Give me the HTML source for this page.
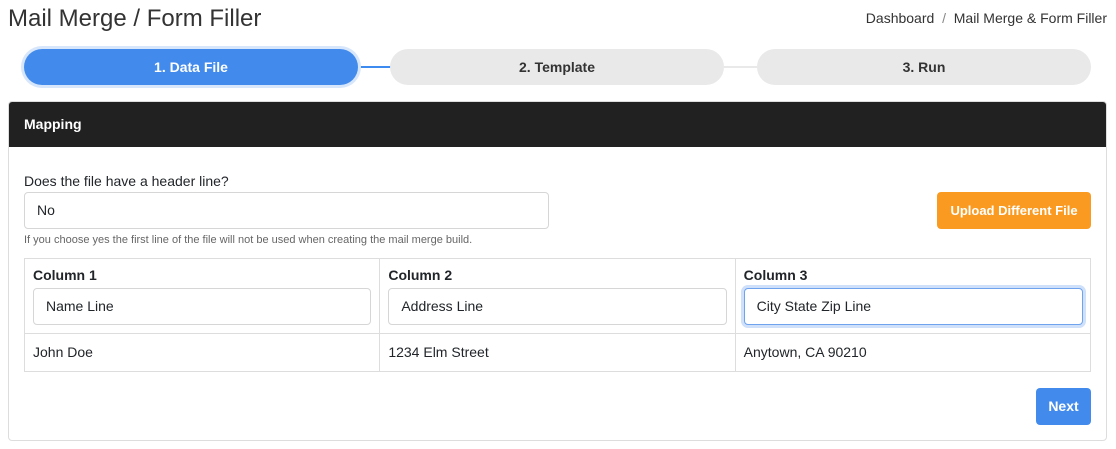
<!DOCTYPE html>
<html><head><style>
*{box-sizing:border-box;margin:0;padding:0}
body{width:1116px;height:449px;background:#fff;font-family:"Liberation Sans",sans-serif;color:#212529;position:relative;overflow:hidden;font-size:14px}
.abs{position:absolute}
h1{position:absolute;left:8px;top:5px;font-size:24px;font-weight:400;color:#333}
.bc{position:absolute;right:9px;top:10px;font-size:14px;color:#333}
.step{position:absolute;top:49px;height:36px;border-radius:18px;background:#e9e9e9;text-align:center;line-height:36px;font-size:14px;font-weight:bold;color:#333}
.card{position:absolute;left:8px;top:101px;width:1099px;height:340px;border:1px solid #ddd;border-radius:4px;overflow:hidden}
.hd{background:#212121;color:#fff;height:45px;line-height:45px;padding-left:15px;font-size:14px;font-weight:bold}
.inp{position:absolute;border:1px solid #d6d6d6;border-radius:4px;height:37px;line-height:35px;padding-left:12px;background:#fff;font-size:14px}
table{position:absolute;left:15px;top:156px;width:1067px;border-collapse:collapse}
td{border:1px solid #ddd;vertical-align:top;padding:8px;height:75px;width:33.3%;position:relative}
tr.r2 td{height:38px;padding:10px 8px}
b{font-size:14px}
</style></head><body>
<h1>Mail Merge / Form Filler</h1>
<div class="bc">Dashboard &nbsp;<span style="color:#888">/</span>&nbsp; Mail Merge &amp; Form Filler</div>
<div class="abs" style="left:358px;top:66px;width:34px;height:2px;background:#3d8af0"></div>
<div class="abs" style="left:724px;top:66px;width:34px;height:2px;background:#e9e9e9"></div>
<div class="step" style="left:21px;top:46px;width:340px;height:42px;border-radius:21px;background:#d7e6fb"></div>
<div class="step" style="left:24px;width:334px;background:#428bed;color:#fff">1. Data File</div>
<div class="step" style="left:390px;width:334px">2. Template</div>
<div class="step" style="left:757px;width:334px">3. Run</div>
<div class="card">
<div class="hd">Mapping</div>
<div class="abs" style="left:15px;top:71px">Does the file have a header line?</div>
<div class="inp" style="left:15px;top:90px;width:525px">No</div>
<div class="abs" style="left:15px;top:132px;font-size:11px;color:#666">If you choose yes the first line of the file will not be used when creating the mail merge build.</div>
<div class="abs" style="left:928px;top:90px;width:154px;height:37px;background:#fb9a20;border-radius:4px;color:#fff;font-weight:bold;font-size:13px;line-height:37px;text-align:center">Upload Different File</div>
<table>
<tr><td><b>Column 1</b><div class="inp" style="left:8px;top:29px;width:338px">Name Line</div></td>
<td><b>Column 2</b><div class="inp" style="left:8px;top:29px;width:339px">Address Line</div></td>
<td><b>Column 3</b><div class="inp" style="left:8px;top:29px;width:339px;border-color:#6fa3ee;box-shadow:0 0 0 3px #cfe0fa">City State Zip Line</div></td></tr>
<tr class="r2"><td>John Doe</td><td>1234 Elm Street</td><td>Anytown, CA 90210</td></tr>
</table>
<div class="abs" style="left:1027px;top:286px;width:55px;height:37px;background:#428bed;border-radius:4px;color:#fff;font-weight:bold;line-height:37px;text-align:center">Next</div>
</div>
</body></html>
